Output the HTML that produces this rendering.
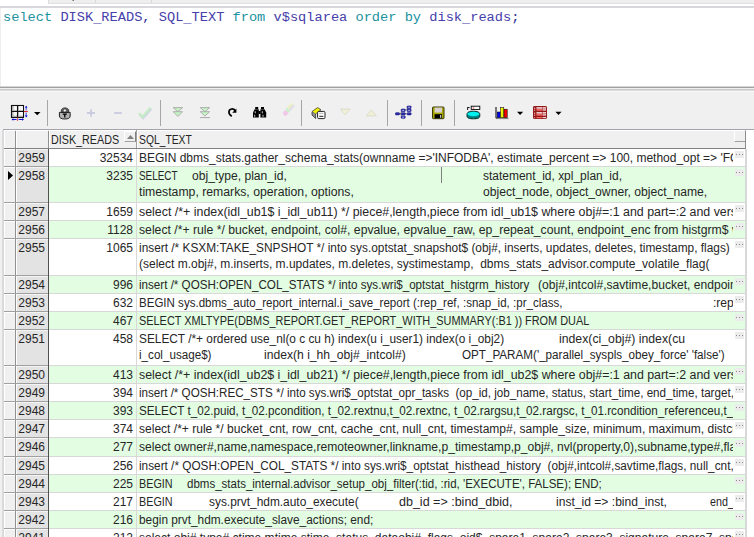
<!DOCTYPE html><html><head><meta charset="utf-8"><style>
*{margin:0;padding:0;box-sizing:border-box}
html,body{width:754px;height:537px;overflow:hidden;background:#fff}
body{position:relative;font-family:'Liberation Sans', sans-serif;font-size:12px;color:#000}
.a{position:absolute}
.t{position:absolute;white-space:pre;line-height:16px;height:16px;transform-origin:0 0;color:#262626}
.ed{position:absolute;white-space:pre;font-family:"Liberation Mono",monospace;font-size:13.67px;line-height:16px}
.u{position:relative;top:1.5px}.kw{color:#2092a0}.p{color:#2a2a9a}.id{color:#4640aa}
</style></head><body>

<div class=a style="left:48px;top:0;width:706px;height:4px;background:#eeeeee;border-left:1px solid #dcdcdc;border-bottom:1px solid #e0e0e0"></div>
<div class=a style="left:95px;top:0;width:1px;height:3px;background:#d8d8d8"></div>
<div class=a style="left:72px;top:0;width:1px;height:1px;background:#d0a070"></div><div class=a style="left:73px;top:0;width:1px;height:1px;background:#5080a8"></div>
<div class=a style="left:151px;top:0;width:1px;height:3px;background:#d8d8d8"></div>
<div class=a style="left:0;top:6px;width:754px;height:2px;background:#d7d8dc"></div>
<div class=a style="left:0;top:8px;width:1px;height:78px;background:#eeeeee"></div>
<div class=ed style="left:3px;top:9.5px"><span class=kw>select</span> <span class=id>DISK<span class=u>_</span>READS</span><span class=p>,</span> <span class=id>SQL<span class=u>_</span>TEXT</span> <span class=kw>from</span> <span class=id>v$sqlarea</span> <span class=kw>order by</span> <span class=id>disk<span class=u>_</span>reads</span><span class=p>;</span></div>
<div class=a style="left:0;top:86px;width:754px;height:1px;background:#d4d6da"></div>
<div class=a style="left:0;top:87px;width:754px;height:1px;background:#a0a0a0"></div>
<div class=a style="left:0;top:88px;width:754px;height:1px;background:#f0f0f0"></div>
<div class=a style="left:0;top:89px;width:754px;height:1px;background:#cacaca"></div>
<div class=a style="left:0;top:90px;width:754px;height:1px;background:#dcdcdc"></div>
<div class=a style="left:0;top:91px;width:754px;height:1px;background:#f8f8f8"></div>
<div class=a style="left:0;top:92px;width:754px;height:37px;background:#f0f0f0"></div>
<div class=a style="left:0;top:129px;width:2px;height:408px;background:#f0f0f0"></div>
<svg class=a style="left:0;top:90px" width="754" height="39" viewBox="0 90 754 39">
<g fill="#a6a6a6">
<rect x="47" y="100" width="1" height="26"/>
<rect x="160" y="100" width="1" height="26"/>
<rect x="301" y="100" width="1" height="26"/>
<rect x="387" y="100" width="1" height="26"/>
<rect x="421" y="100" width="1" height="26"/>
<rect x="454" y="100" width="1" height="26"/>
</g>
<!-- grid icon -->
<rect x="11.5" y="105.5" width="12" height="12" fill="#fff"/>
<g fill="#b8b8b8"><rect x="12" y="106" width="1.6" height="11"/><rect x="12" y="115.6" width="11" height="1.6"/><rect x="18" y="106" width="1" height="5"/><rect x="18" y="112" width="1" height="5"/><rect x="12" y="110" width="5" height="1"/><rect x="18" y="110" width="5" height="1"/></g>
<g fill="#e0e0e0"><rect x="14.5" y="107" width="0.6" height="3"/><rect x="20.5" y="107" width="0.6" height="3"/><rect x="14.5" y="113" width="0.6" height="2.5"/><rect x="20.5" y="113" width="0.6" height="2.5"/></g>
<rect x="11.5" y="105.5" width="12" height="12" fill="none" stroke="#101010" stroke-width="1.1"/>
<path d="M17.5 105.5V117.5M11.5 111.5H23.5" stroke="#101010" stroke-width="1.1"/>
<path d="M26.2 107V110.5M26.2 112.5V116" stroke="#8080e0" stroke-width="1.5"/>
<path d="M24.8 107.6L26.2 105.8L27.6 107.6ZM24.8 115.6L26.2 117.4L27.6 115.6Z" fill="#0000d8"/>
<path d="M24 111.5H27.8" stroke="#e02828" stroke-width="1"/>
<path d="M12.5 119.5H16.6M18.6 119.5H23" stroke="#1818e0" stroke-width="1.2"/>
<path d="M13.4 118.2L11.6 119.5L13.4 120.8ZM22.2 118.2L24 119.5L22.2 120.8Z" fill="#0000d8"/>
<path d="M17.5 117.6V121" stroke="#e06060" stroke-width="1"/>
<path d="M34 112H40.5L37.25 115.2Z" fill="#000"/>
<!-- lock -->
<path d="M61.3 112.5V110.5C61.3 107 68.7 107 68.7 110.5V112.5Z" fill="#606060" stroke="#202020" stroke-width="0.8"/>
<circle cx="64.8" cy="110.6" r="1.1" fill="#fff"/>
<path d="M59.4 112.4H70.2V116C70.2 118.2 68 119 64.8 119C61.6 119 59.4 118.2 59.4 116Z" fill="#b0b0b0" stroke="#101010" stroke-width="0.9"/>
<path d="M62.8 114.2H66.8M64.8 114.2V117.6" stroke="#000" stroke-width="1.3"/>
<!-- plus minus -->
<path d="M87 113H95M91 109.2V116.8" stroke="#cacae0" stroke-width="1.8"/>
<path d="M114.2 113H121.8" stroke="#cacae0" stroke-width="1.8"/>
<!-- check -->
<path d="M139 113.3L142.5 117L150.5 107.8" stroke="#d0d0ea" stroke-width="2.6" fill="none" transform="translate(0.6,0.8)"/>
<path d="M139 113.3L142.5 117L150.5 107.8" stroke="#c4ecc4" stroke-width="2.4" fill="none"/>
<!-- double down -->
<g fill="#c4f4c4" stroke="#a8a8a8" stroke-width="0.9" stroke-linejoin="round">
<path d="M173.2 107.6H182.6L177.9 111.6Z"/><path d="M173.2 111.7H182.6L177.9 116.4Z"/>
<path d="M200.2 107.6H209.6L204.9 111.6Z"/><path d="M200.2 111.7H209.6L204.9 116Z"/>
</g>
<path d="M200 117.6H210" stroke="#a8a8a8" stroke-width="1"/>
<!-- refresh -->
<path d="M231.8 116.3C228 114.2 228 109.6 231.6 109C233.5 108.7 234.8 109.8 235.3 111.2" stroke="#000" stroke-width="1.7" fill="none"/>
<path d="M236.4 108.4V112.8H232.2Z" fill="#000"/>
<!-- binoculars -->
<g fill="#000">
<rect x="255.2" y="107" width="3" height="2"/><rect x="261" y="107" width="3" height="2"/>
<path d="M254.6 109.3H258.8V117.6H253V112.6Z"/>
<path d="M260.4 109.3H264.6L266.2 112.6V117.6H260.4Z"/>
<rect x="258.5" y="111" width="2.2" height="3"/>
</g>
<g fill="#c8c8c8"><rect x="254.7" y="111.3" width="1" height="2"/><rect x="261.8" y="111.3" width="1" height="2"/><rect x="254.2" y="114.8" width="1" height="2"/><rect x="262.5" y="114.8" width="1" height="2"/></g>
<!-- eraser -->
<g transform="rotate(-50 288 110)" opacity="0.42">
<rect x="281.5" y="107.8" width="5" height="4.6" rx="2" fill="#f090e0"/>
<rect x="286" y="107.8" width="3" height="4.6" fill="#a0e8a0"/>
<rect x="289" y="107.8" width="6.5" height="4.6" fill="#eeee90"/>
<rect x="289" y="110.5" width="6.5" height="1.9" fill="#c0c0ee"/>
</g>
<!-- folder db -->
<path d="M312 111.6L317.6 107.6L321 109.8L315.4 114Z" fill="#f0f000" stroke="#404040" stroke-width="0.8"/>
<path d="M312 111.8V115L315.6 118.6L315.6 114" fill="#909090" stroke="#303030" stroke-width="0.8"/>
<rect x="317.6" y="111.4" width="7.4" height="7.2" rx="1.2" fill="#fff" stroke="#202020" stroke-width="1"/>
<path d="M319.3 116.3H323.4" stroke="#202020" stroke-width="1"/>
<path d="M319.3 113.3H323.4" stroke="#a0a0a0" stroke-width="0.8"/>
<!-- pale triangles -->
<path d="M340.2 109.2H350.2L345.2 114.6Z" fill="#f0f0d8" stroke="#d8d8c0" stroke-width="0.8"/>
<path d="M366.2 115.8H376.4L371.3 110Z" fill="#f0f0d8" stroke="#d8d8c0" stroke-width="0.8"/>
<!-- tree -->
<g stroke="#808060" stroke-width="0.8" fill="none"><path d="M399.5 113.8H407M401 113.8C401 110 403 110.3 403 110.3M401 113.8C401 117 403 117.1 403 117.1M405 110.3C407 110.3 407 107.2 409 107.2"/></g>
<g fill="#3030b0" stroke="#101080" stroke-width="0.6">
<rect x="395.5" y="112.7" width="4" height="2.2" rx="0.6"/>
<rect x="401.2" y="109.1" width="4" height="2.4" rx="0.6"/>
<rect x="401.2" y="112.7" width="4" height="2.2" rx="0.6"/>
<rect x="401.2" y="115.9" width="4" height="2.4" rx="0.6"/>
<rect x="407.1" y="106" width="4" height="2.4" rx="0.6"/>
<rect x="407.1" y="109.1" width="4" height="2.4" rx="0.6"/>
<rect x="407.1" y="112.7" width="4" height="2.2" rx="0.6"/>
</g>
<g fill="#d8d8f0"><rect x="402.2" y="109.9" width="2" height="0.8"/><rect x="402.2" y="116.7" width="2" height="0.8"/><rect x="408.1" y="106.8" width="2" height="0.8"/><rect x="408.1" y="109.9" width="2" height="0.8"/></g>
<!-- floppy -->
<rect x="432.5" y="107" width="11.5" height="11.7" rx="0.8" fill="#a8a800" stroke="#383810" stroke-width="1"/>
<rect x="434.6" y="107.6" width="7.4" height="5" fill="#d8d0d0"/>
<rect x="434.6" y="114.2" width="7.4" height="4" fill="#000"/>
<rect x="440" y="115" width="1.3" height="2.8" fill="#c0c0c0"/>
<!-- cyan db -->
<rect x="471.2" y="106.2" width="8.6" height="3.2" fill="#fff" stroke="#000" stroke-width="0.9"/>
<rect x="472.6" y="107.4" width="1.6" height="1" fill="#e03030"/>
<path d="M467.6 107.2V110M467.6 107.5H469.6" stroke="#000" stroke-width="0.9"/>
<path d="M467 114.4C467 112 469.5 111.2 473.4 111.2C477.3 111.2 479.8 112 479.8 114.4V116C479.8 118.2 477.3 118.8 473.4 118.8C469.5 118.8 467 118.2 467 116Z" fill="#008080" stroke="#002020" stroke-width="0.9"/>
<ellipse cx="473.4" cy="114" rx="6" ry="2.2" fill="#00f0f0"/>
<!-- chart -->
<path d="M496 107V118.2H508" stroke="#000" stroke-width="1" fill="none"/>
<path d="M496.5 118.6H508.5" stroke="#909090" stroke-width="1"/>
<rect x="497.2" y="112" width="3" height="5.6" fill="#0000f0" stroke="#000" stroke-width="0.5"/>
<rect x="500.6" y="107.6" width="3.2" height="10" fill="#f0f000" stroke="#000" stroke-width="0.5"/>
<rect x="504" y="109.2" width="3.2" height="8.4" fill="#f00000" stroke="#000" stroke-width="0.5"/>
<path d="M517 111.8H523.2L520.1 115Z" fill="#000"/>
<!-- red table -->
<rect x="533.5" y="106.5" width="13" height="12" rx="0.6" fill="#c04848" stroke="#901818" stroke-width="1"/>
<g fill="#e8dada"><rect x="536.3" y="107.2" width="5.8" height="1.5"/><rect x="536.3" y="112.1" width="5.8" height="1.5"/></g>
<g fill="#f06464"><rect x="536.3" y="108.9" width="5.8" height="1.8"/><rect x="536.3" y="113.8" width="5.8" height="1.8"/><rect x="536.3" y="117" width="5.8" height="1.3"/></g>
<g fill="#f4eeee"><rect x="542.8" y="107.3" width="3.3" height="1.2"/><rect x="542.8" y="109.4" width="3.3" height="1.1"/><rect x="542.8" y="112.2" width="3.3" height="1.2"/><rect x="542.8" y="114.4" width="3.3" height="1.1"/><rect x="542.8" y="117.2" width="3.3" height="1"/></g>
<g fill="#8a1010"><rect x="534" y="110.9" width="12.4" height="0.9"/><rect x="534" y="115.9" width="12.4" height="0.9"/><rect x="535.4" y="107" width="0.9" height="11.5"/></g>
<g fill="#f0c8c8"><rect x="534.2" y="108" width="0.9" height="0.8"/><rect x="534.2" y="110" width="0.9" height="0.7"/><rect x="534.2" y="113" width="0.9" height="0.8"/><rect x="534.2" y="115" width="0.9" height="0.7"/><rect x="534.2" y="117.5" width="0.9" height="0.8"/></g>
<path d="M555.4 111.8H561.6L558.5 115Z" fill="#000"/>
</svg>

<div class=a style="left:2px;top:130px;width:2px;height:407px;background:#dadadc"></div>
<div class=a style="left:3px;top:129px;width:751px;height:1px;background:#a4a4aa"></div>
<div class=a style="left:4px;top:130px;width:742px;height:18px;background:#f0f0f0"></div>
<div class=a style="left:4px;top:130px;width:11px;height:1px;background:#fff"></div>
<div class=a style="left:4px;top:130px;width:1px;height:18px;background:#fff"></div>
<div class=a style="left:16px;top:130px;width:32px;height:1px;background:#fff"></div>
<div class=a style="left:16px;top:130px;width:1px;height:18px;background:#fff"></div>
<div class=a style="left:49px;top:130px;width:87px;height:1px;background:#fff"></div>
<div class=a style="left:49px;top:130px;width:1px;height:18px;background:#fff"></div>
<div class=a style="left:137px;top:130px;width:608px;height:1px;background:#fff"></div>
<div class=a style="left:137px;top:130px;width:1px;height:18px;background:#fff"></div>
<div class=a style="left:15px;top:131px;width:1px;height:406px;background:#909090"></div>
<div class=a style="left:48px;top:131px;width:1px;height:17px;background:#909090"></div>
<div class=a style="left:48px;top:148px;width:1px;height:389px;background:#505050"></div>
<div class=a style="left:136px;top:130px;width:1px;height:18px;background:#a0a0a0"></div>
<div class=a style="left:4px;top:148px;width:742px;height:1px;background:#808080"></div>
<div class=t style="left:50.8px;top:131.5px;transform:scaleX(0.8957)">DISK_READS</div>
<div class=t style="left:138.5px;top:131.5px;transform:scaleX(0.8605)">SQL_TEXT</div>
<div class=a style="left:124px;top:131px;width:12px;height:11px;border-left:1px solid #fff;border-top:1px solid #fff;border-right:1px solid #808080;border-bottom:1px solid #a0a0a0"></div>
<svg class=a style="left:126px;top:134px" width="9" height="6"><path d="M1 5 L4.5 1 L8 5 Z" fill="#808080"/></svg>
<div class=a style="left:734px;top:130px;width:12px;height:12px;border-left:1px solid #fff;border-top:1px solid #fff;border-right:1px solid #808080;border-bottom:1px solid #a0a0a0"></div>
<div class=a style="left:745px;top:131px;width:1px;height:18px;background:#8c8c8c"></div>
<div class=a style="left:747px;top:130px;width:7px;height:407px;background:#fff"></div>
<div class=a style="left:49px;top:149px;width:696px;height:17px;background:#fff"></div>
<div class=a style="left:4px;top:149px;width:11px;height:17px;background:#f0f0f0;border-left:1px solid #fff;border-top:1px solid #fff"></div>
<div class=a style="left:16px;top:149px;width:32px;height:17px;background:#e3e3e3;border-left:1px solid #fff;border-top:1px solid #f4f4f4"></div>
<div class=a style="left:136px;top:149px;width:1px;height:17px;background:#d8d8d8"></div>
<div class=a style="left:4px;top:166px;width:44px;height:1px;background:#a0a0a0"></div>
<div class=a style="left:49px;top:166px;width:696px;height:1px;background:#d8d8d8"></div>
<div class=t style="left:16px;top:150.14px;width:29px;text-align:right">2959</div>
<div class=t style="left:49px;top:150.14px;width:84px;text-align:right">32534</div>
<div class=a style="left:49px;top:167px;width:696px;height:35px;background:#e2fde2"></div>
<div class=a style="left:4px;top:167px;width:11px;height:35px;background:#f0f0f0;border-left:1px solid #fff;border-top:1px solid #fff"></div>
<div class=a style="left:16px;top:167px;width:32px;height:35px;background:#e3e3e3;border-left:1px solid #fff;border-top:1px solid #f4f4f4"></div>
<div class=a style="left:136px;top:167px;width:1px;height:35px;background:#d8d8d8"></div>
<div class=a style="left:4px;top:202px;width:44px;height:1px;background:#a0a0a0"></div>
<div class=a style="left:49px;top:202px;width:696px;height:1px;background:#d8d8d8"></div>
<div class=t style="left:16px;top:168.14px;width:29px;text-align:right">2958</div>
<div class=t style="left:49px;top:168.14px;width:84px;text-align:right">3235</div>
<div class=a style="left:49px;top:203px;width:696px;height:17px;background:#fff"></div>
<div class=a style="left:4px;top:203px;width:11px;height:17px;background:#f0f0f0;border-left:1px solid #fff;border-top:1px solid #fff"></div>
<div class=a style="left:16px;top:203px;width:32px;height:17px;background:#e3e3e3;border-left:1px solid #fff;border-top:1px solid #f4f4f4"></div>
<div class=a style="left:136px;top:203px;width:1px;height:17px;background:#d8d8d8"></div>
<div class=a style="left:4px;top:220px;width:44px;height:1px;background:#a0a0a0"></div>
<div class=a style="left:49px;top:220px;width:696px;height:1px;background:#d8d8d8"></div>
<div class=t style="left:16px;top:204.14px;width:29px;text-align:right">2957</div>
<div class=t style="left:49px;top:204.14px;width:84px;text-align:right">1659</div>
<div class=a style="left:49px;top:221px;width:696px;height:17px;background:#e2fde2"></div>
<div class=a style="left:4px;top:221px;width:11px;height:17px;background:#f0f0f0;border-left:1px solid #fff;border-top:1px solid #fff"></div>
<div class=a style="left:16px;top:221px;width:32px;height:17px;background:#e3e3e3;border-left:1px solid #fff;border-top:1px solid #f4f4f4"></div>
<div class=a style="left:136px;top:221px;width:1px;height:17px;background:#d8d8d8"></div>
<div class=a style="left:4px;top:238px;width:44px;height:1px;background:#a0a0a0"></div>
<div class=a style="left:49px;top:238px;width:696px;height:1px;background:#d8d8d8"></div>
<div class=t style="left:16px;top:222.14px;width:29px;text-align:right">2956</div>
<div class=t style="left:49px;top:222.14px;width:84px;text-align:right">1128</div>
<div class=a style="left:49px;top:239px;width:696px;height:36px;background:#fff"></div>
<div class=a style="left:4px;top:239px;width:11px;height:36px;background:#f0f0f0;border-left:1px solid #fff;border-top:1px solid #fff"></div>
<div class=a style="left:16px;top:239px;width:32px;height:36px;background:#e3e3e3;border-left:1px solid #fff;border-top:1px solid #f4f4f4"></div>
<div class=a style="left:136px;top:239px;width:1px;height:36px;background:#d8d8d8"></div>
<div class=a style="left:4px;top:275px;width:44px;height:1px;background:#a0a0a0"></div>
<div class=a style="left:49px;top:275px;width:696px;height:1px;background:#d8d8d8"></div>
<div class=t style="left:16px;top:240.14px;width:29px;text-align:right">2955</div>
<div class=t style="left:49px;top:240.14px;width:84px;text-align:right">1065</div>
<div class=a style="left:49px;top:276px;width:696px;height:17px;background:#e2fde2"></div>
<div class=a style="left:4px;top:276px;width:11px;height:17px;background:#f0f0f0;border-left:1px solid #fff;border-top:1px solid #fff"></div>
<div class=a style="left:16px;top:276px;width:32px;height:17px;background:#e3e3e3;border-left:1px solid #fff;border-top:1px solid #f4f4f4"></div>
<div class=a style="left:136px;top:276px;width:1px;height:17px;background:#d8d8d8"></div>
<div class=a style="left:4px;top:293px;width:44px;height:1px;background:#a0a0a0"></div>
<div class=a style="left:49px;top:293px;width:696px;height:1px;background:#d8d8d8"></div>
<div class=t style="left:16px;top:277.14px;width:29px;text-align:right">2954</div>
<div class=t style="left:49px;top:277.14px;width:84px;text-align:right">996</div>
<div class=a style="left:49px;top:294px;width:696px;height:17px;background:#fff"></div>
<div class=a style="left:4px;top:294px;width:11px;height:17px;background:#f0f0f0;border-left:1px solid #fff;border-top:1px solid #fff"></div>
<div class=a style="left:16px;top:294px;width:32px;height:17px;background:#e3e3e3;border-left:1px solid #fff;border-top:1px solid #f4f4f4"></div>
<div class=a style="left:136px;top:294px;width:1px;height:17px;background:#d8d8d8"></div>
<div class=a style="left:4px;top:311px;width:44px;height:1px;background:#a0a0a0"></div>
<div class=a style="left:49px;top:311px;width:696px;height:1px;background:#d8d8d8"></div>
<div class=t style="left:16px;top:295.14px;width:29px;text-align:right">2953</div>
<div class=t style="left:49px;top:295.14px;width:84px;text-align:right">632</div>
<div class=a style="left:49px;top:312px;width:696px;height:17px;background:#e2fde2"></div>
<div class=a style="left:4px;top:312px;width:11px;height:17px;background:#f0f0f0;border-left:1px solid #fff;border-top:1px solid #fff"></div>
<div class=a style="left:16px;top:312px;width:32px;height:17px;background:#e3e3e3;border-left:1px solid #fff;border-top:1px solid #f4f4f4"></div>
<div class=a style="left:136px;top:312px;width:1px;height:17px;background:#d8d8d8"></div>
<div class=a style="left:4px;top:329px;width:44px;height:1px;background:#a0a0a0"></div>
<div class=a style="left:49px;top:329px;width:696px;height:1px;background:#d8d8d8"></div>
<div class=t style="left:16px;top:313.14px;width:29px;text-align:right">2952</div>
<div class=t style="left:49px;top:313.14px;width:84px;text-align:right">467</div>
<div class=a style="left:49px;top:330px;width:696px;height:35px;background:#fff"></div>
<div class=a style="left:4px;top:330px;width:11px;height:35px;background:#f0f0f0;border-left:1px solid #fff;border-top:1px solid #fff"></div>
<div class=a style="left:16px;top:330px;width:32px;height:35px;background:#e3e3e3;border-left:1px solid #fff;border-top:1px solid #f4f4f4"></div>
<div class=a style="left:136px;top:330px;width:1px;height:35px;background:#d8d8d8"></div>
<div class=a style="left:4px;top:365px;width:44px;height:1px;background:#a0a0a0"></div>
<div class=a style="left:49px;top:365px;width:696px;height:1px;background:#d8d8d8"></div>
<div class=t style="left:16px;top:331.14px;width:29px;text-align:right">2951</div>
<div class=t style="left:49px;top:331.14px;width:84px;text-align:right">458</div>
<div class=a style="left:49px;top:366px;width:696px;height:17px;background:#e2fde2"></div>
<div class=a style="left:4px;top:366px;width:11px;height:17px;background:#f0f0f0;border-left:1px solid #fff;border-top:1px solid #fff"></div>
<div class=a style="left:16px;top:366px;width:32px;height:17px;background:#e3e3e3;border-left:1px solid #fff;border-top:1px solid #f4f4f4"></div>
<div class=a style="left:136px;top:366px;width:1px;height:17px;background:#d8d8d8"></div>
<div class=a style="left:4px;top:383px;width:44px;height:1px;background:#a0a0a0"></div>
<div class=a style="left:49px;top:383px;width:696px;height:1px;background:#d8d8d8"></div>
<div class=t style="left:16px;top:367.14px;width:29px;text-align:right">2950</div>
<div class=t style="left:49px;top:367.14px;width:84px;text-align:right">413</div>
<div class=a style="left:49px;top:384px;width:696px;height:17px;background:#fff"></div>
<div class=a style="left:4px;top:384px;width:11px;height:17px;background:#f0f0f0;border-left:1px solid #fff;border-top:1px solid #fff"></div>
<div class=a style="left:16px;top:384px;width:32px;height:17px;background:#e3e3e3;border-left:1px solid #fff;border-top:1px solid #f4f4f4"></div>
<div class=a style="left:136px;top:384px;width:1px;height:17px;background:#d8d8d8"></div>
<div class=a style="left:4px;top:401px;width:44px;height:1px;background:#a0a0a0"></div>
<div class=a style="left:49px;top:401px;width:696px;height:1px;background:#d8d8d8"></div>
<div class=t style="left:16px;top:385.14px;width:29px;text-align:right">2949</div>
<div class=t style="left:49px;top:385.14px;width:84px;text-align:right">394</div>
<div class=a style="left:49px;top:402px;width:696px;height:17px;background:#e2fde2"></div>
<div class=a style="left:4px;top:402px;width:11px;height:17px;background:#f0f0f0;border-left:1px solid #fff;border-top:1px solid #fff"></div>
<div class=a style="left:16px;top:402px;width:32px;height:17px;background:#e3e3e3;border-left:1px solid #fff;border-top:1px solid #f4f4f4"></div>
<div class=a style="left:136px;top:402px;width:1px;height:17px;background:#d8d8d8"></div>
<div class=a style="left:4px;top:419px;width:44px;height:1px;background:#a0a0a0"></div>
<div class=a style="left:49px;top:419px;width:696px;height:1px;background:#d8d8d8"></div>
<div class=t style="left:16px;top:403.14px;width:29px;text-align:right">2948</div>
<div class=t style="left:49px;top:403.14px;width:84px;text-align:right">393</div>
<div class=a style="left:49px;top:420px;width:696px;height:17px;background:#fff"></div>
<div class=a style="left:4px;top:420px;width:11px;height:17px;background:#f0f0f0;border-left:1px solid #fff;border-top:1px solid #fff"></div>
<div class=a style="left:16px;top:420px;width:32px;height:17px;background:#e3e3e3;border-left:1px solid #fff;border-top:1px solid #f4f4f4"></div>
<div class=a style="left:136px;top:420px;width:1px;height:17px;background:#d8d8d8"></div>
<div class=a style="left:4px;top:437px;width:44px;height:1px;background:#a0a0a0"></div>
<div class=a style="left:49px;top:437px;width:696px;height:1px;background:#d8d8d8"></div>
<div class=t style="left:16px;top:421.14px;width:29px;text-align:right">2947</div>
<div class=t style="left:49px;top:421.14px;width:84px;text-align:right">374</div>
<div class=a style="left:49px;top:438px;width:696px;height:18px;background:#e2fde2"></div>
<div class=a style="left:4px;top:438px;width:11px;height:18px;background:#f0f0f0;border-left:1px solid #fff;border-top:1px solid #fff"></div>
<div class=a style="left:16px;top:438px;width:32px;height:18px;background:#e3e3e3;border-left:1px solid #fff;border-top:1px solid #f4f4f4"></div>
<div class=a style="left:136px;top:438px;width:1px;height:18px;background:#d8d8d8"></div>
<div class=a style="left:4px;top:456px;width:44px;height:1px;background:#a0a0a0"></div>
<div class=a style="left:49px;top:456px;width:696px;height:1px;background:#d8d8d8"></div>
<div class=t style="left:16px;top:439.14px;width:29px;text-align:right">2946</div>
<div class=t style="left:49px;top:439.14px;width:84px;text-align:right">277</div>
<div class=a style="left:49px;top:457px;width:696px;height:17px;background:#fff"></div>
<div class=a style="left:4px;top:457px;width:11px;height:17px;background:#f0f0f0;border-left:1px solid #fff;border-top:1px solid #fff"></div>
<div class=a style="left:16px;top:457px;width:32px;height:17px;background:#e3e3e3;border-left:1px solid #fff;border-top:1px solid #f4f4f4"></div>
<div class=a style="left:136px;top:457px;width:1px;height:17px;background:#d8d8d8"></div>
<div class=a style="left:4px;top:474px;width:44px;height:1px;background:#a0a0a0"></div>
<div class=a style="left:49px;top:474px;width:696px;height:1px;background:#d8d8d8"></div>
<div class=t style="left:16px;top:458.14px;width:29px;text-align:right">2945</div>
<div class=t style="left:49px;top:458.14px;width:84px;text-align:right">256</div>
<div class=a style="left:49px;top:475px;width:696px;height:17px;background:#e2fde2"></div>
<div class=a style="left:4px;top:475px;width:11px;height:17px;background:#f0f0f0;border-left:1px solid #fff;border-top:1px solid #fff"></div>
<div class=a style="left:16px;top:475px;width:32px;height:17px;background:#e3e3e3;border-left:1px solid #fff;border-top:1px solid #f4f4f4"></div>
<div class=a style="left:136px;top:475px;width:1px;height:17px;background:#d8d8d8"></div>
<div class=a style="left:4px;top:492px;width:44px;height:1px;background:#a0a0a0"></div>
<div class=a style="left:49px;top:492px;width:696px;height:1px;background:#d8d8d8"></div>
<div class=t style="left:16px;top:476.14px;width:29px;text-align:right">2944</div>
<div class=t style="left:49px;top:476.14px;width:84px;text-align:right">225</div>
<div class=a style="left:49px;top:493px;width:696px;height:17px;background:#fff"></div>
<div class=a style="left:4px;top:493px;width:11px;height:17px;background:#f0f0f0;border-left:1px solid #fff;border-top:1px solid #fff"></div>
<div class=a style="left:16px;top:493px;width:32px;height:17px;background:#e3e3e3;border-left:1px solid #fff;border-top:1px solid #f4f4f4"></div>
<div class=a style="left:136px;top:493px;width:1px;height:17px;background:#d8d8d8"></div>
<div class=a style="left:4px;top:510px;width:44px;height:1px;background:#a0a0a0"></div>
<div class=a style="left:49px;top:510px;width:696px;height:1px;background:#d8d8d8"></div>
<div class=t style="left:16px;top:494.14px;width:29px;text-align:right">2943</div>
<div class=t style="left:49px;top:494.14px;width:84px;text-align:right">217</div>
<div class=a style="left:49px;top:511px;width:696px;height:17px;background:#e2fde2"></div>
<div class=a style="left:4px;top:511px;width:11px;height:17px;background:#f0f0f0;border-left:1px solid #fff;border-top:1px solid #fff"></div>
<div class=a style="left:16px;top:511px;width:32px;height:17px;background:#e3e3e3;border-left:1px solid #fff;border-top:1px solid #f4f4f4"></div>
<div class=a style="left:136px;top:511px;width:1px;height:17px;background:#d8d8d8"></div>
<div class=a style="left:4px;top:528px;width:44px;height:1px;background:#a0a0a0"></div>
<div class=a style="left:49px;top:528px;width:696px;height:1px;background:#d8d8d8"></div>
<div class=t style="left:16px;top:512.14px;width:29px;text-align:right">2942</div>
<div class=t style="left:49px;top:512.14px;width:84px;text-align:right">216</div>
<div class=a style="left:49px;top:529px;width:696px;height:17px;background:#fff"></div>
<div class=a style="left:4px;top:529px;width:11px;height:17px;background:#f0f0f0;border-left:1px solid #fff;border-top:1px solid #fff"></div>
<div class=a style="left:16px;top:529px;width:32px;height:17px;background:#e3e3e3;border-left:1px solid #fff;border-top:1px solid #f4f4f4"></div>
<div class=a style="left:136px;top:529px;width:1px;height:17px;background:#d8d8d8"></div>
<div class=a style="left:4px;top:546px;width:44px;height:1px;background:#a0a0a0"></div>
<div class=a style="left:49px;top:546px;width:696px;height:1px;background:#d8d8d8"></div>
<div class=t style="left:16px;top:530.14px;width:29px;text-align:right">2941</div>
<div class=t style="left:49px;top:530.14px;width:84px;text-align:right">212</div>
<div class=a style="left:137px;top:0;width:596px;height:537px;overflow:hidden"><div class=t style="left:2.3px;top:150.14px;transform:scaleX(0.9998)">BEGIN dbms_stats.gather_schema_stats(ownname =&gt;'INFODBA', estimate_percent =&gt; 100, method_opt =&gt; 'FOR ALL COLUMNS SIZE AUTO')</div><div class=t style="left:2.3px;top:168.14px;transform:scaleX(0.8268)">SELECT</div><div class=t style="left:54.8px;top:168.14px;transform:scaleX(1.0077)">obj_type, plan_id,</div><div class=t style="left:346.3px;top:168.14px;transform:scaleX(0.9969)">statement_id, xpl_plan_id,</div><div class=t style="left:2.3px;top:184.14px;transform:scaleX(1.0191)">timestamp, remarks, operation, options,</div><div class=t style="left:345.8px;top:184.14px;transform:scaleX(1.0122)">object_node, object_owner, object_name,</div><div class=t style="left:2.3px;top:204.14px;transform:scaleX(1.0326)">select /*+ index(idl_ub1$ i_idl_ub11) */ piece#,length,piece from idl_ub1$ where obj#=:1 and part=:2 and version=:3 order by piece#</div><div class=t style="left:2.3px;top:222.14px;transform:scaleX(1.0176)">select /*+ rule */ bucket, endpoint, col#, epvalue, epvalue_raw, ep_repeat_count, endpoint_enc from histgrm$ where obj#=:1</div><div class=t style="left:2.3px;top:240.14px;transform:scaleX(0.9882)">insert /* KSXM:TAKE_SNPSHOT */ into sys.optstat_snapshot$ (obj#, inserts, updates, deletes, timestamp, flags)</div><div class=t style="left:2.3px;top:256.14px;transform:scaleX(0.9991)">(select m.obj#, m.inserts, m.updates, m.deletes, systimestamp,  dbms_stats_advisor.compute_volatile_flag(</div><div class=t style="left:2.3px;top:277.14px;transform:scaleX(0.9684)">insert /* QOSH:OPEN_COL_STATS */ into sys.wri$_optstat_histgrm_history</div><div class=t style="left:401.0px;top:277.14px;transform:scaleX(1.0066)">(obj#,intcol#,savtime,bucket, endpoint, epvalue</div><div class=t style="left:2.3px;top:295.14px;transform:scaleX(0.9618)">BEGIN sys.dbms_auto_report_internal.i_save_report (:rep_ref, :snap_id, :pr_class,</div><div class=t style="left:575.9px;top:295.14px;transform:scaleX(1.0054)">:rep</div><div class=t style="left:2.3px;top:313.14px;transform:scaleX(0.9085)">SELECT XMLTYPE(DBMS_REPORT.GET_REPORT_WITH_SUMMARY(:B1 )) FROM DUAL</div><div class=t style="left:2.3px;top:331.14px;transform:scaleX(0.9877)">SELECT /*+ ordered use_nl(o c cu h) index(u i_user1) index(o i_obj2)</div><div class=t style="left:421.5px;top:331.14px;transform:scaleX(1.0218)">index(ci_obj#) index(cu</div><div class=t style="left:2.3px;top:347.14px;transform:scaleX(0.9703)">i_col_usage$)</div><div class=t style="left:127.3px;top:347.14px;transform:scaleX(1.0114)">index(h i_hh_obj#_intcol#)</div><div class=t style="left:324.8px;top:347.14px;transform:scaleX(0.9712)">OPT_PARAM('_parallel_syspls_obey_force' 'false')</div><div class=t style="left:2.3px;top:367.14px;transform:scaleX(1.0309)">select /*+ index(idl_ub2$ i_idl_ub21) */ piece#,length,piece from idl_ub2$ where obj#=:1 and part=:2 and version=:3 order by piece#</div><div class=t style="left:2.3px;top:385.14px;transform:scaleX(0.9684)">insert /* QOSH:REC_STS */ into sys.wri$_optstat_opr_tasks  (op_id, job_name, status, start_time, end_time, target, notes)</div><div class=t style="left:2.3px;top:403.14px;transform:scaleX(0.9739)">SELECT t_02.puid, t_02.pcondition, t_02.rextnu,t_02.rextnc, t_02.rargsu,t_02.rargsc, t_01.rcondition_referenceu,t_01.rcondition_referencec</div><div class=t style="left:2.3px;top:421.14px;transform:scaleX(1.0033)">select /*+ rule */ bucket_cnt, row_cnt, cache_cnt, null_cnt, timestamp#, sample_size, minimum, maximum, distcnt, lowval</div><div class=t style="left:2.3px;top:439.14px;transform:scaleX(1.0076)">select owner#,name,namespace,remoteowner,linkname,p_timestamp,p_obj#, nvl(property,0),subname,type#,flags,d_attrs</div><div class=t style="left:2.3px;top:458.14px;transform:scaleX(0.9827)">insert /* QOSH:OPEN_COL_STATS */ into sys.wri$_optstat_histhead_history  (obj#,intcol#,savtime,flags, null_cnt, minimum</div><div class=t style="left:2.3px;top:476.14px;transform:scaleX(0.8997)">BEGIN</div><div class=t style="left:49.8px;top:476.14px;transform:scaleX(0.9600)">dbms_stats_internal.advisor_setup_obj_filter(:tid, :rid, 'EXECUTE', FALSE); END;</div><div class=t style="left:2.3px;top:494.14px;transform:scaleX(0.8997)">BEGIN</div><div class=t style="left:72.1px;top:494.14px;transform:scaleX(0.9924)">sys.prvt_hdm.auto_execute(</div><div class=t style="left:262.2px;top:494.14px;transform:scaleX(1.0426)">db_id =&gt; :bind_dbid,</div><div class=t style="left:419.0px;top:494.14px;transform:scaleX(1.0075)">inst_id =&gt; :bind_inst,</div><div class=t style="left:572.5px;top:494.14px;transform:scaleX(0.8950)">end_date</div><div class=t style="left:2.3px;top:512.14px;transform:scaleX(0.9865)">begin prvt_hdm.execute_slave_actions; end;</div><div class=t style="left:2.3px;top:530.14px;transform:scaleX(1.0018)">select obj#,type#,ctime,mtime,stime, status, dataobj#, flags, oid$, spare1, spare2, spare3, signature, spare7, spare8, spare9</div></div>
<div class=a style="left:735px;top:151px;width:9px;height:7px;background:#ececec"></div><div class=a style="left:736px;top:154px;width:7px;height:1px;background:repeating-linear-gradient(90deg,#8a8a8a 0 1px,transparent 1px 3px)"></div><div class=a style="left:735px;top:169px;width:9px;height:7px;background:#ececec"></div><div class=a style="left:736px;top:172px;width:7px;height:1px;background:repeating-linear-gradient(90deg,#8a8a8a 0 1px,transparent 1px 3px)"></div><div class=a style="left:735px;top:205px;width:9px;height:7px;background:#ececec"></div><div class=a style="left:736px;top:208px;width:7px;height:1px;background:repeating-linear-gradient(90deg,#8a8a8a 0 1px,transparent 1px 3px)"></div><div class=a style="left:735px;top:223px;width:9px;height:7px;background:#ececec"></div><div class=a style="left:736px;top:226px;width:7px;height:1px;background:repeating-linear-gradient(90deg,#8a8a8a 0 1px,transparent 1px 3px)"></div><div class=a style="left:735px;top:241px;width:9px;height:7px;background:#ececec"></div><div class=a style="left:736px;top:244px;width:7px;height:1px;background:repeating-linear-gradient(90deg,#8a8a8a 0 1px,transparent 1px 3px)"></div><div class=a style="left:735px;top:278px;width:9px;height:7px;background:#ececec"></div><div class=a style="left:736px;top:281px;width:7px;height:1px;background:repeating-linear-gradient(90deg,#8a8a8a 0 1px,transparent 1px 3px)"></div><div class=a style="left:735px;top:296px;width:9px;height:7px;background:#ececec"></div><div class=a style="left:736px;top:299px;width:7px;height:1px;background:repeating-linear-gradient(90deg,#8a8a8a 0 1px,transparent 1px 3px)"></div><div class=a style="left:735px;top:314px;width:9px;height:7px;background:#ececec"></div><div class=a style="left:736px;top:317px;width:7px;height:1px;background:repeating-linear-gradient(90deg,#8a8a8a 0 1px,transparent 1px 3px)"></div><div class=a style="left:735px;top:332px;width:9px;height:7px;background:#ececec"></div><div class=a style="left:736px;top:335px;width:7px;height:1px;background:repeating-linear-gradient(90deg,#8a8a8a 0 1px,transparent 1px 3px)"></div><div class=a style="left:735px;top:368px;width:9px;height:7px;background:#ececec"></div><div class=a style="left:736px;top:371px;width:7px;height:1px;background:repeating-linear-gradient(90deg,#8a8a8a 0 1px,transparent 1px 3px)"></div><div class=a style="left:735px;top:386px;width:9px;height:7px;background:#ececec"></div><div class=a style="left:736px;top:389px;width:7px;height:1px;background:repeating-linear-gradient(90deg,#8a8a8a 0 1px,transparent 1px 3px)"></div><div class=a style="left:735px;top:404px;width:9px;height:7px;background:#ececec"></div><div class=a style="left:736px;top:407px;width:7px;height:1px;background:repeating-linear-gradient(90deg,#8a8a8a 0 1px,transparent 1px 3px)"></div><div class=a style="left:735px;top:422px;width:9px;height:7px;background:#ececec"></div><div class=a style="left:736px;top:425px;width:7px;height:1px;background:repeating-linear-gradient(90deg,#8a8a8a 0 1px,transparent 1px 3px)"></div><div class=a style="left:735px;top:440px;width:9px;height:7px;background:#ececec"></div><div class=a style="left:736px;top:443px;width:7px;height:1px;background:repeating-linear-gradient(90deg,#8a8a8a 0 1px,transparent 1px 3px)"></div><div class=a style="left:735px;top:459px;width:9px;height:7px;background:#ececec"></div><div class=a style="left:736px;top:462px;width:7px;height:1px;background:repeating-linear-gradient(90deg,#8a8a8a 0 1px,transparent 1px 3px)"></div><div class=a style="left:735px;top:477px;width:9px;height:7px;background:#ececec"></div><div class=a style="left:736px;top:480px;width:7px;height:1px;background:repeating-linear-gradient(90deg,#8a8a8a 0 1px,transparent 1px 3px)"></div><div class=a style="left:735px;top:495px;width:9px;height:7px;background:#ececec"></div><div class=a style="left:736px;top:498px;width:7px;height:1px;background:repeating-linear-gradient(90deg,#8a8a8a 0 1px,transparent 1px 3px)"></div><div class=a style="left:735px;top:513px;width:9px;height:7px;background:#ececec"></div><div class=a style="left:736px;top:516px;width:7px;height:1px;background:repeating-linear-gradient(90deg,#8a8a8a 0 1px,transparent 1px 3px)"></div><div class=a style="left:735px;top:531px;width:9px;height:7px;background:#ececec"></div><div class=a style="left:736px;top:534px;width:7px;height:1px;background:repeating-linear-gradient(90deg,#8a8a8a 0 1px,transparent 1px 3px)"></div>
<div class=a style="left:745px;top:149px;width:2px;height:388px;background:#d8d8d8"></div>
<svg class=a style="left:7px;top:170px" width="8" height="12"><path d="M1 1 L6 5.5 L1 10 Z" fill="#000"/></svg>
<div class=a style="left:441px;top:167px;width:1px;height:16px;background:#808080"></div>
</body></html>
